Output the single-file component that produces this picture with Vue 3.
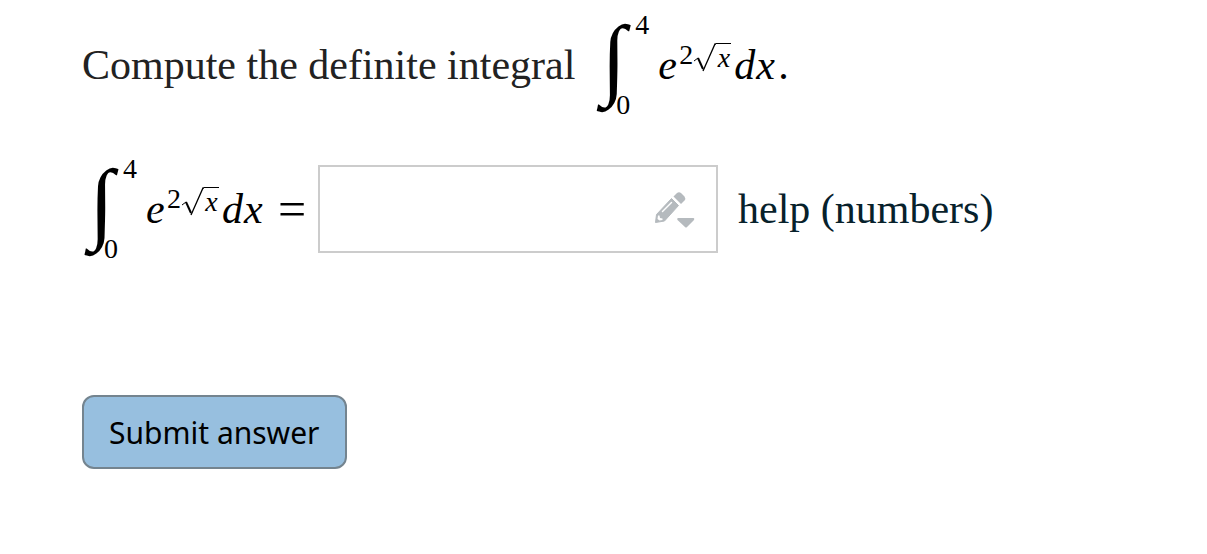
<script setup>
import { ref } from 'vue'

const answer = ref('')
const rows = [
  { id: 'prompt', tail: '.' },
  { id: 'answer', tail: '=' }
]
</script>

<template>
  <main class="problem">
    <form class="form" @submit.prevent>
      <div v-for="row in rows" :key="row.id" class="row">
        <span v-if="row.id === 'prompt'" class="prompt">Compute the definite integral</span>
        <span class="formula">
          <span class="integral">∫</span>
          <span class="bounds">
            <span class="upper">4</span>
            <span class="lower">0</span>
          </span>
          <i class="base">e</i>
          <span class="power">
            <span>2</span>
            <svg class="radical" width="23" height="30" viewBox="0 0 23 30" aria-hidden="true">
              <path d="M1 18 L5 15" fill="none" stroke="#000" stroke-width="1" />
              <path d="M5 15 L10 26" fill="none" stroke="#000" stroke-width="2" />
              <path d="M10 28 L22 1 H23" fill="none" stroke="#000" stroke-width="1.3" />
            </svg>
            <i class="radicand">x</i>
          </span>
          <i class="d">d</i>
          <i class="x">x</i>
          <span :class="row.id === 'prompt' ? 'period' : 'equals'">{{ row.tail }}</span>
        </span>
        <template v-if="row.id === 'answer'">
          <span class="field">
            <input v-model="answer" class="entry" type="text" aria-label="Value of the integral" />
            <button class="editor" type="button" aria-label="Open equation editor">
              <svg width="42" height="38" viewBox="0 0 42 38" aria-hidden="true">
                <path d="M1.500 31.500 L2.500 23.500 L17.500 7.500 L24.500 14.500 L10.500 30 Z" fill="#b5babe" stroke="#b5babe" stroke-width="1" stroke-linejoin="round" />
                <path d="M19.500 5.500 L23 2 Q25 .5 27 2 L30.500 5.500 Q32 7.500 30.500 9.500 L27 13 Z" fill="#b5babe" />
                <path d="M8.500 20.500 L17.500 11.500" stroke="#fff" stroke-width="1.500" stroke-linecap="round" />
                <path d="M4 24.500 L5.500 24.500 L6 27 L8.500 27.500 L8.500 29 L5.500 29.500 L3.500 28 Z" fill="#fff" />
                <path d="M24 27 H39.500 Q41 27.500 40 29 L33 36 Q32 37 31 36 L23.500 29 Q22.500 27.500 24 27 Z" fill="#b5babe" />
              </svg>
            </button>
          </span>
          <a class="help" href="#">help (numbers)</a>
        </template>
      </div>
      <button class="submit" type="submit">Submit answer</button>
    </form>
  </main>
</template>

<style>
body {
  background: #fff;
}
</style>

<style scoped>
.problem {
  padding: 15px 82px 40px;
  font-family: "Liberation Serif", "Times New Roman", serif;
  font-size: 42px;
  line-height: 48px;
  color: #000;
}
.form {
  display: flex;
  flex-direction: column;
  align-items: flex-start;
  gap: 44px;
}
.row {
  display: flex;
  align-items: center;
  min-height: 100px;
  white-space: nowrap;
}
.prompt {
  margin-right: 19px;
  color: #222;
}
.formula {
  display: flex;
  align-items: center;
}
.integral {
  align-self: flex-start;
  box-sizing: border-box;
  width: 36px;
  padding-left: 7px;
  font-style: italic;
  font-size: 90px;
  line-height: 86px;
}
.bounds {
  display: flex;
  flex-direction: column;
  justify-content: space-between;
  width: 28px;
  height: 100px;
  font-size: 28px;
  line-height: 20px;
}
.upper {
  margin-left: 5px;
}
.lower {
  margin-left: -14px;
}
.base {
  width: 21px;
}
.power {
  display: flex;
  align-items: flex-start;
  width: 55px;
  height: 48px;
  font-size: 28px;
  line-height: 28px;
}
.radical {
  margin-top: 2px;
}
.radicand {
  width: 15px;
  margin-top: 2px;
  border-top: 1px solid #000;
  text-align: center;
}
.d,
.x {
  width: 22px;
}
.equals {
  width: 28px;
  margin: 0 12px;
  font-size: 50px;
  text-align: center;
}
.field {
  display: grid;
  align-items: center;
}
.entry {
  grid-area: 1 / 1;
  box-sizing: border-box;
  width: 400px;
  height: 88px;
  padding: 0 72px 0 16px;
  border: 2px solid #ccc;
  background: #fff;
  font: inherit;
}
.editor {
  grid-area: 1 / 1;
  justify-self: end;
  display: flex;
  margin-right: 22px;
  padding: 2px 0 0;
  border: 0;
  background: none;
}
.help {
  margin-left: 20px;
  color: #07212b;
  text-decoration: none;
}
.submit {
  margin-top: 92px;
  padding: 15px 25px 13px;
  border: 2px solid #74848f;
  border-radius: 12px;
  background: #97bfdf;
  color: #000;
  font-family: "Noto Sans", "Open Sans", sans-serif;
  font-size: 30px;
  line-height: 42px;
}
</style>
